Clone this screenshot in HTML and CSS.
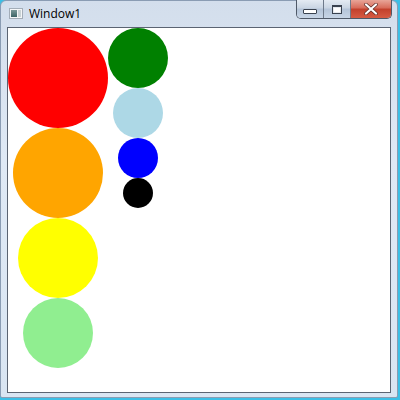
FILE: index.html
```html
<!DOCTYPE html>
<html lang="en">
    <head>
        <title>Window1</title>
        <link rel="stylesheet" href="styles.css">
    </head>
    <body>
        <div class="window">
            <div class="titlebar">
                <div class="appicon"><span class="pane"></span><span class="side"></span></div>
                <span class="title">Window1</span>
                <div class="buttons">
                    <div class="btn min"><span class="bar"></span></div>
                    <div class="btn max"><span class="box"></span></div>
                    <div class="btn close">
                        <svg width="16" height="12" viewBox="0 0 16 12">
                            <path d="M3 1.5 L13 10.5 M13 1.5 L3 10.5" stroke="#5a2a26" stroke-width="3.6" stroke-linecap="round"/>
                            <path d="M3 1.5 L13 10.5 M13 1.5 L3 10.5" stroke="#fff" stroke-width="2.2" stroke-linecap="round"/>
                        </svg>
                    </div>
                </div>
            </div>
            <div class="client">
                <div class="wrap">
                    <div class="dot red"></div>
                    <div class="dot orange"></div>
                    <div class="dot yellow"></div>
                    <div class="dot lightgreen"></div>
                    <div class="dot green"></div>
                    <div class="dot lightblue"></div>
                    <div class="dot blue"></div>
                    <div class="dot black"></div>
                </div>
            </div>
        </div>
    </body>
</html>
```

FILE: styles.css
```css
body{margin: 0; background: #3cbfe6; width: 400px; height: 400px; overflow: hidden;}
.window{width: 398px; height: 398px; box-sizing: border-box; background: linear-gradient(to bottom, #d3deec, #dfe9f5 40%, #d9e5f2); border: 1px solid #8a9cb3; border-radius: 6px 6px 2px 2px; padding: 0 6px 5px 6px;}
.titlebar{height: 26px; display: flex; align-items: flex-start; position: relative;}
.appicon{width: 14px; height: 11px; margin: 7px 6px 0 2px; background: #f4f6f8; border: 1px solid #a3adb8; box-sizing: border-box; display: flex; padding: 1px; gap: 1px;}
.appicon .pane{width: 6px; background: linear-gradient(#7a9899, #3c6466);}
.appicon .side{width: 3px; background: #c9d3d6;}
.title{font-family: "Open Sans", "Noto Sans", sans-serif; font-size: 12px; color: #000; margin-top: 4px;}
.buttons{position: absolute; right: -1px; top: -1px; display: flex; border: 1px solid #4f5968; border-top: none; border-radius: 0 0 5px 5px; overflow: hidden; height: 18px;}
.btn{display: flex; align-items: center; justify-content: center; height: 18px;}
.min, .max{width: 26px; background: linear-gradient(to bottom, #e4ebf3, #c9d5e3 45%, #b4c4d8 50%, #c7d5e6); border-right: 1px solid #6e7a8a;}
.min .bar{width: 12px; height: 3px; border: 1px solid #3a4350; background: #fff; margin-top: 5px; border-radius: 1px;}
.max .box{width: 8px; height: 6px; border: 1px solid #3a4350; border-top-width: 2px; background: #fff; box-shadow: inset 0 0 0 1px #e6eaef;}
.close{width: 40px; background: linear-gradient(to bottom, #e8a598, #d76a58 45%, #c2402c 50%, #d65b43);}
.client{background: #fff; border: 1px solid #5b6472; height: 364px;}
.wrap{height: 364px; display: flex; flex-direction: column; flex-wrap: wrap; align-items: center; align-content: flex-start;}
.dot{border-radius: 50%; flex: none;}
.red{width: 100px; height: 100px; background: #ff0000;}
.orange{width: 90px; height: 90px; background: #ffa500;}
.yellow{width: 80px; height: 80px; background: #ffff00;}
.lightgreen{width: 70px; height: 70px; background: #90ee90;}
.green{width: 60px; height: 60px; background: #008000;}
.lightblue{width: 50px; height: 50px; background: #add8e6;}
.blue{width: 40px; height: 40px; background: #0000ff;}
.black{width: 30px; height: 30px; background: #000;}
```
